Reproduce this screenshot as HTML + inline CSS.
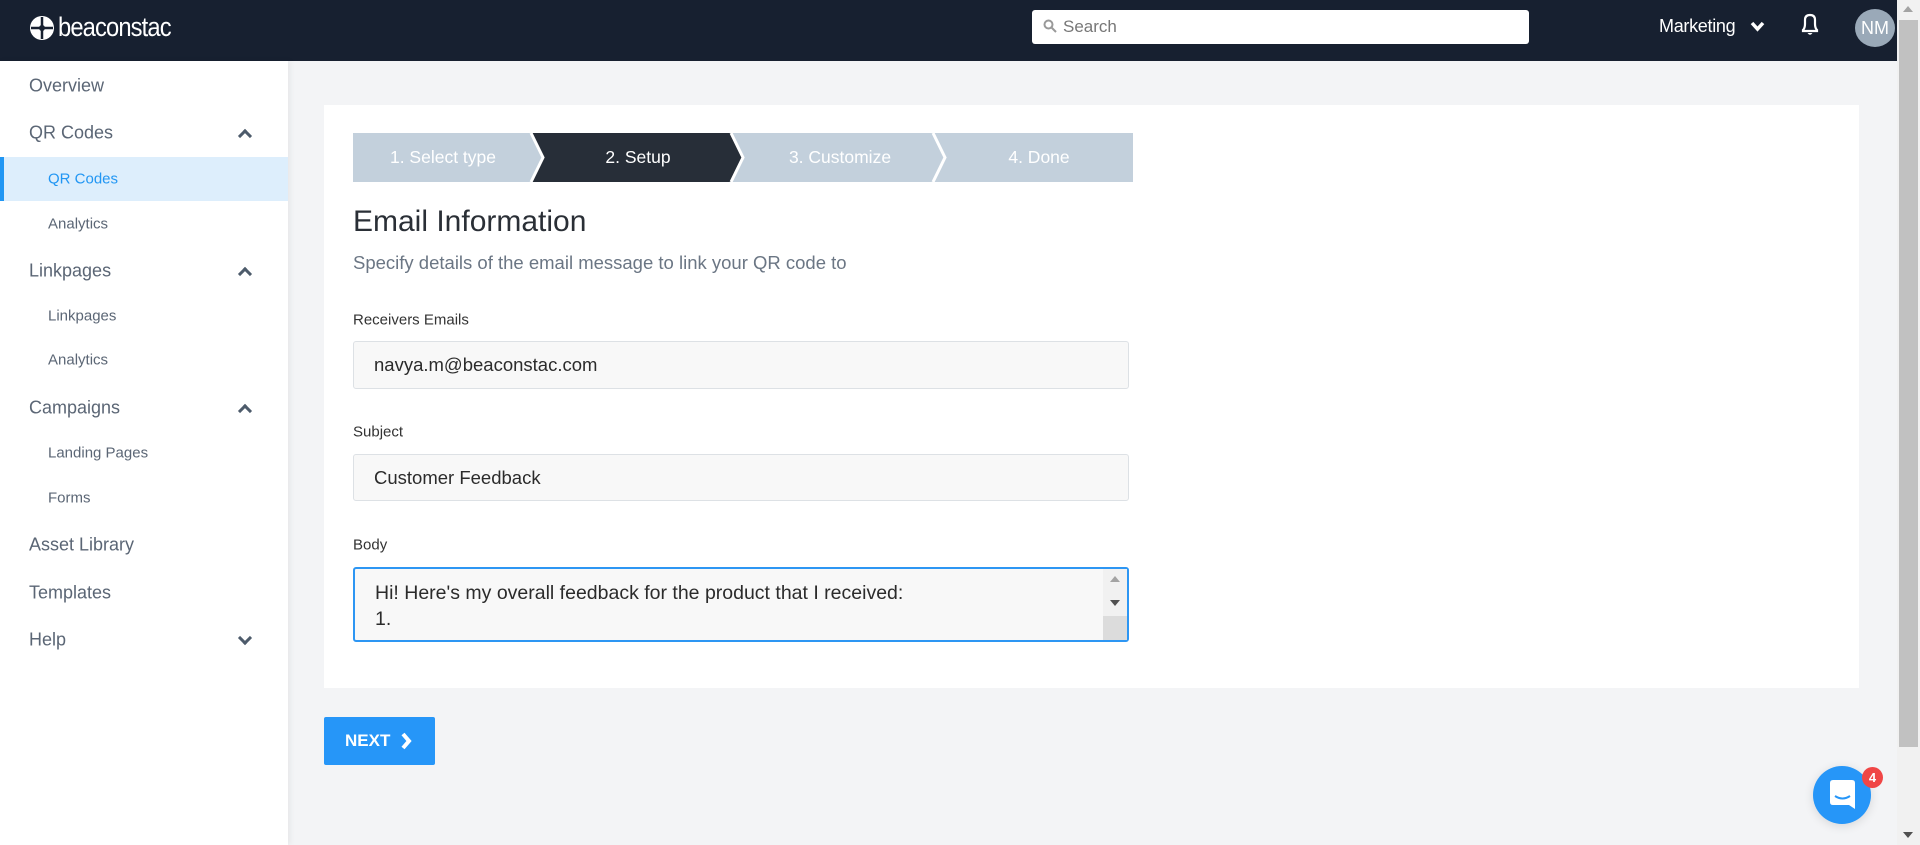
<!DOCTYPE html>
<html><head><meta charset="utf-8"><style>
*{box-sizing:border-box;margin:0;padding:0}
body{width:1920px;height:845px;overflow:hidden;background:#f3f4f6;font-family:"Liberation Sans",sans-serif;position:relative}
.hdr{position:absolute;left:0;top:0;width:1897px;height:61px;background:#172030}
.abs{position:absolute}
.side{position:absolute;left:0;top:61px;width:288px;height:784px;background:#fff;box-shadow:2px 0 6px rgba(0,0,0,.06)}
.si{position:absolute;left:29px;font-size:18px;color:#5b6675;transform:translateY(-50%)}
.ss{position:absolute;left:48px;font-size:15px;color:#5b6675;transform:translateY(-50%)}
.chev{position:absolute;left:240px;width:10px;height:10px;border-left:3px solid #4d5b6b;border-top:3px solid #4d5b6b}
.card{position:absolute;left:324px;top:105px;width:1535px;height:583px;background:#fff}
.lbl{position:absolute;left:353px;font-size:15px;color:#333;transform:translateY(-50%)}
.inp{position:absolute;left:353px;width:776px;background:#f8f8f8;border:1px solid #dde1e5;border-radius:3px;font-size:18.5px;color:#2b2b2b;padding-left:20px}
</style></head><body>
<div class="hdr"></div>
<svg class="abs" style="left:29px;top:15px" width="26" height="26" viewBox="0 0 26 26"><circle cx="13" cy="13" r="12" fill="#fff"/><path d="M13 13 L13 2 M13 13 L24 13 M13 13 L13 24 M13 13 L2 13" stroke="#172030" stroke-width="2.5"/><circle cx="13" cy="13" r="3" fill="#172030"/></svg>
<div class="abs" style="left:58px;top:12px;font-size:27px;color:#fff;letter-spacing:-1px;transform:scaleX(.88);transform-origin:left">beaconstac</div>
<div class="abs" style="left:1032px;top:10px;width:497px;height:34px;background:#fff;border-radius:3px"></div>
<svg class="abs" style="left:1043px;top:19px" width="14" height="14" viewBox="0 0 14 14"><circle cx="5.5" cy="5.5" r="4" stroke="#999" stroke-width="2" fill="none"/><path d="M8.5 8.5L13 13" stroke="#999" stroke-width="2"/></svg>
<div class="abs" style="left:1063px;top:17px;font-size:17px;color:#777">Search</div>
<div class="abs" style="left:1659px;top:16px;font-size:18px;color:#fff;letter-spacing:-.3px">Marketing</div>
<svg class="abs" style="left:1750px;top:21px" width="15" height="12" viewBox="0 0 15 12"><path d="M2 2L7.5 8L13 2" stroke="#fff" stroke-width="3.5" fill="none"/></svg>
<svg class="abs" style="left:1799px;top:12px" width="22" height="26" viewBox="0 0 22 26"><path d="M4 19 L4 18 Q6 16 6 12 L6 8 Q6 3 11 3 Q16 3 16 8 L16 12 Q16 16 18 18 L18 19 Z" fill="none" stroke="#fff" stroke-width="2.2"/><path d="M8.5 21 Q11 24.5 13.5 21Z" fill="#fff"/></svg>
<div class="abs" style="left:1855px;top:9px;width:40px;height:38px;border-radius:50%;background:#9aa9b8;color:#fff;font-size:18px;line-height:38px;text-align:center">NM</div>
<div class="abs" style="left:1897px;top:0;width:23px;height:845px;background:#f1f1f1"></div>
<div class="abs" style="left:1899px;top:20px;width:19px;height:727px;background:#c1c1c1"></div>
<div class="abs" style="left:1903px;top:6px;border:5px solid transparent;border-bottom:6px solid #a3a3a3;border-top:0"></div>
<div class="abs" style="left:1903px;top:832px;border:5px solid transparent;border-top:6px solid #505050;border-bottom:0"></div>

<div class="side">
<div class="si" style="top:25px">Overview</div>
<div class="si" style="top:72px">QR Codes</div><div class="chev" style="top:70px;transform:rotate(45deg)"></div>
<div class="abs" style="left:0;top:96px;width:288px;height:44px;background:#ddeefc;border-left:4px solid #2196f3"></div>
<div class="ss" style="top:118px;color:#2196f3">QR Codes</div>
<div class="ss" style="top:163px">Analytics</div>
<div class="si" style="top:210px">Linkpages</div><div class="chev" style="top:208px;transform:rotate(45deg)"></div>
<div class="ss" style="top:255px">Linkpages</div>
<div class="ss" style="top:299px">Analytics</div>
<div class="si" style="top:347px">Campaigns</div><div class="chev" style="top:345px;transform:rotate(45deg)"></div>
<div class="ss" style="top:392px">Landing Pages</div>
<div class="ss" style="top:437px">Forms</div>
<div class="si" style="top:484px">Asset Library</div>
<div class="si" style="top:532px">Templates</div>
<div class="si" style="top:579px">Help</div><div class="chev" style="top:572px;transform:rotate(225deg)"></div>
</div>

<div class="card"></div>
<svg class="abs" style="left:353px;top:133px" width="780" height="49" viewBox="0 0 780 49">
<rect x="0" y="0" width="780" height="49" fill="#c3d0dc"/>
<polygon points="178,0 378,0 390,24.5 378,49 178,49 190,24.5" fill="#272e38"/>
<polyline points="178,0 190,24.5 178,49" fill="none" stroke="#fff" stroke-width="3"/>
<polyline points="378,0 390,24.5 378,49" fill="none" stroke="#fff" stroke-width="3"/>
<polyline points="580,0 592,24.5 580,49" fill="none" stroke="#fff" stroke-width="3"/>
<g font-family="Liberation Sans" font-size="17.5" fill="#fff" text-anchor="middle">
<text x="90" y="30">1. Select type</text><text x="285" y="30">2. Setup</text><text x="487" y="30">3. Customize</text><text x="686" y="30">4. Done</text></g>
</svg>
<div class="abs" style="left:353px;top:205px;font-size:30px;color:#2a2f36">Email Information</div>
<div class="abs" style="left:353px;top:252px;font-size:18.5px;color:#6b7684">Specify details of the email message to link your QR code to</div>
<div class="lbl" style="top:320px">Receivers Emails</div>
<div class="inp" style="top:341px;height:48px;line-height:46px">navya.m@beaconstac.com</div>
<div class="lbl" style="top:432px">Subject</div>
<div class="inp" style="top:454px;height:47px;line-height:45px">Customer Feedback</div>
<div class="lbl" style="top:545px">Body</div>
<div class="inp" style="top:567px;height:75px;border:2px solid #2d96f3;line-height:26px;padding-top:11px;font-size:19.5px">Hi! Here's my overall feedback for the product that I received:<br>1.</div>
<div class="abs" style="left:1103px;top:569px;width:24px;height:71px;background:#f1f1f1"></div>
<div class="abs" style="left:1103px;top:616px;width:24px;height:24px;background:#dcdcdc"></div>
<div class="abs" style="left:1110px;top:576px;border:5px solid transparent;border-bottom:6px solid #a3a3a3;border-top:0"></div>
<div class="abs" style="left:1110px;top:600px;border:5px solid transparent;border-top:6px solid #505050;border-bottom:0"></div>

<div class="abs" style="left:324px;top:717px;width:111px;height:48px;background:#2696f8;border-radius:2px;color:#fff;font-size:17px;font-weight:bold;line-height:48px;padding-left:21px">NEXT</div>
<svg class="abs" style="left:400px;top:731px" width="12" height="20" viewBox="0 0 12 20"><path d="M3 3L9 10L3 17" stroke="#fff" stroke-width="4" fill="none"/></svg>

<div class="abs" style="left:1813px;top:766px;width:58px;height:58px;border-radius:50%;background:#2696f8;box-shadow:0 2px 10px rgba(0,0,0,.12)"></div>
<svg class="abs" style="left:1829px;top:780px" width="27" height="30" viewBox="0 0 27 30"><path d="M4 0H23Q26 0 26 3V29L20 25H4Q1 25 1 22V3Q1 0 4 0Z" fill="#fff"/><path d="M6 16Q13.5 21 21 16" stroke="#2696f8" stroke-width="2" fill="none"/></svg>
<div class="abs" style="left:1862px;top:767px;width:21px;height:21px;border-radius:50%;background:#f04646;color:#fff;font-size:13px;font-weight:bold;line-height:21px;text-align:center">4</div>
</body></html>
